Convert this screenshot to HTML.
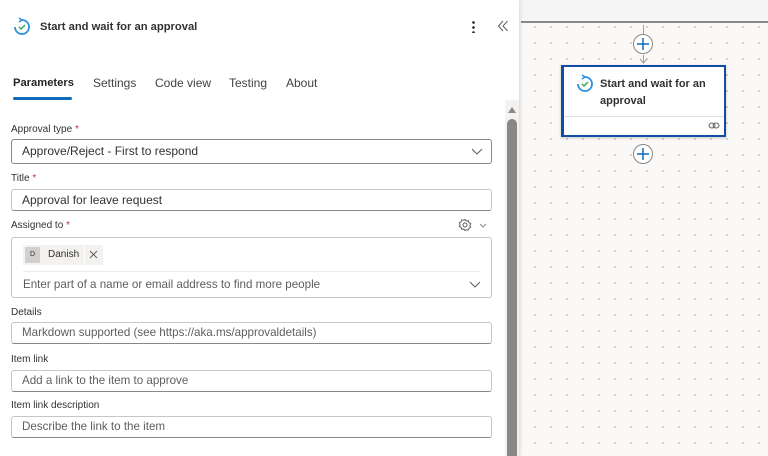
<!DOCTYPE html>
<html><head><style>
*{box-sizing:border-box;margin:0;padding:0}
body{width:768px;height:456px;overflow:hidden;font-family:"Liberation Sans",sans-serif;background:#faf9f8;position:relative}
.panel{position:absolute;left:0;top:0;width:519px;height:456px;background:#fff;box-shadow:1px 0 4px rgba(0,0,0,.15)}
.abs{position:absolute}
.lbl{position:absolute;left:11px;font-size:10px;color:#323130}
.req{color:#c4314b}
.inp{position:absolute;left:11px;width:481px;border:1px solid #8a8886;border-radius:3px;font-size:12px;color:#323130;padding-left:10px;background:#fff}
.ph{color:#605e5c;font-size:11.6px}
.canvas{position:absolute;left:521px;top:0;width:247px;height:456px;background-color:#faf9f8;background-image:radial-gradient(#c8c6c4 0.8px,transparent 1px);background-size:16px 16px;background-position:6px 3px}
.plus{position:absolute;width:20px;height:20px;border:1px solid #8a8886;border-radius:50%;background:#fff}
</style></head><body>
<div class="canvas"></div>
<div class="abs" style="left:521px;top:0;width:247px;height:23px;background:#f5f5f5;border-bottom:2px solid #8a8886"></div>
<div class="abs" style="left:643px;top:25px;width:1px;height:10px;background:#a19f9d"></div>
<div class="plus" style="left:633px;top:34px"><svg width="18" height="18" viewBox="0 0 18 18"><path d="M9 3v12M3 9h12" stroke="#0f6cbd" stroke-width="1.5"/></svg></div>
<div class="abs" style="left:643px;top:55px;width:1px;height:8px;background:#a19f9d"></div>
<svg class="abs" style="left:639px;top:58px" width="9" height="6"><path d="M1 1l3.5 4L8 1" stroke="#a19f9d" fill="none"/></svg>
<div class="abs" style="left:561px;top:65px;width:165px;height:72px;background:#fff;border:2px solid #0f4ea3;border-left-width:3px;box-shadow:0 1px 3px rgba(0,0,0,.2)">
<svg class="abs" style="left:11px;top:7px" width="20" height="20" viewBox="0 0 20 20"><path d="M10 3a7 7 0 1 1-7 7" stroke="#2f8fe0" stroke-width="1.8" fill="none"/><path d="M7 1l3 2-3 2" stroke="#2f8fe0" stroke-width="1.6" fill="none"/><path d="M7 10l2 2 4-4" stroke="#3aa853" stroke-width="1.5" fill="none"/></svg>
<div class="abs" style="left:36px;top:9px;font-size:11px;font-weight:bold;color:#323130;line-height:17px;width:120px">Start and wait for an approval</div>
<div class="abs" style="left:0;top:49px;width:160px;height:1px;background:#e1dfdd"></div>
<svg class="abs" style="left:144px;top:54px" width="12" height="9"><ellipse cx="4" cy="4.5" rx="3" ry="2.5" stroke="#605e5c" fill="none"/><ellipse cx="8" cy="4.5" rx="3" ry="2.5" stroke="#605e5c" fill="none"/></svg>
</div>
<div class="plus" style="left:633px;top:144px"><svg width="18" height="18" viewBox="0 0 18 18"><path d="M9 3v12M3 9h12" stroke="#0f6cbd" stroke-width="1.5"/></svg></div>

<div class="panel">
<svg class="abs" style="left:12px;top:17px" width="20" height="20" viewBox="0 0 20 20"><path d="M10 3a7 7 0 1 1-7 7" stroke="#2f8fe0" stroke-width="1.8" fill="none"/><path d="M7 1l3 2-3 2" stroke="#2f8fe0" stroke-width="1.6" fill="none"/><path d="M7 10l2 2 4-4" stroke="#3aa853" stroke-width="1.5" fill="none"/></svg>
<div class="abs" style="left:40px;top:21px;font-size:11.2px;font-weight:bold;color:#323130">Start and wait for an approval</div>
<div class="abs" style="left:472px;top:20px;width:3px;height:13px;background:radial-gradient(circle,#323130 1.2px,transparent 1.5px) 0 0/3px 5px"></div>
<svg class="abs" style="left:497px;top:20px" width="12" height="12"><path d="M6 1L1.5 6 6 11M10.5 1L6 6l4.5 5" stroke="#605e5c" fill="none"/></svg>
<div class="abs" style="left:13px;top:77px;font-size:11.2px;color:#242424;font-weight:bold">Parameters</div>
<div class="abs" style="left:13px;top:97px;width:59px;height:3px;background:#0f6cbd;border-radius:2px"></div>
<div class="abs" style="left:93px;top:76px;font-size:12px;color:#424242">Settings</div>
<div class="abs" style="left:155px;top:76px;font-size:12px;color:#424242">Code view</div>
<div class="abs" style="left:229px;top:76px;font-size:12px;color:#424242">Testing</div>
<div class="abs" style="left:286px;top:76px;font-size:12px;color:#424242">About</div>

<div class="lbl" style="top:124px">Approval type <span class="req">*</span></div>
<div class="inp" style="top:139px;height:25px;line-height:23px">Approve/Reject - First to respond<svg class="abs" style="right:8px;top:8px" width="12" height="8"><path d="M1 1l5 5 5-5" stroke="#605e5c" fill="none"/></svg></div>
<div class="lbl" style="top:173px">Title <span class="req">*</span></div>
<div class="inp" style="top:189px;height:22px;line-height:20px;border-color:#c8c6c4;border-bottom-color:#8a8886">Approval for leave request</div>
<div class="lbl" style="top:220px">Assigned to <span class="req">*</span></div>
<svg class="abs" style="left:458px;top:218px" width="14" height="14" viewBox="0 0 14 14"><circle cx="7" cy="7" r="2" stroke="#605e5c" fill="none"/><path d="M7 1.5l1.3 1.5 2-.3.6 1.9 1.8 1-.8 1.8.8 1.8-1.8 1-.6 1.9-2-.3L7 12.5 5.7 11l-2 .3-.6-1.9-1.8-1 .8-1.8-.8-1.8 1.8-1 .6-1.9 2 .3z" stroke="#605e5c" fill="none"/></svg>
<svg class="abs" style="left:479px;top:223px" width="8" height="5"><path d="M1 1l3 3 3-3" stroke="#8a8886" fill="none"/></svg>
<div class="inp" style="top:237px;height:61px;border-color:#c8c6c4;padding:0">
<div class="abs" style="left:11px;top:7px;width:80px;height:20px;background:#f3f2f1;border-radius:2px"></div>
<div class="abs" style="left:13px;top:9px;width:15px;height:16px;background:#d2d0ce;font-size:7px;text-align:center;line-height:16px;color:#323130">D</div>
<div class="abs" style="left:36px;top:11px;font-size:10px;color:#323130">Danish</div>
<div class="abs" style="left:72px;top:8px;width:1px;height:18px;background:#fff"></div>
<svg class="abs" style="left:77px;top:12px" width="9" height="9"><path d="M1 1l7 7M8 1L1 8" stroke="#605e5c"/></svg>
<div class="abs" style="left:11px;top:33px;width:458px;height:1px;background:#edebe9"></div>
<div class="abs ph" style="left:11px;top:40px">Enter part of a name or email address to find more people</div>
<svg class="abs" style="left:457px;top:43px" width="12" height="8"><path d="M1 1l5 5 5-5" stroke="#605e5c" fill="none"/></svg>
</div>
<div class="lbl" style="top:307px">Details</div>
<div class="inp ph" style="top:322px;height:22px;line-height:20px;border-color:#c8c6c4;border-bottom-color:#8a8886">Markdown supported (see https://aka.ms/approvaldetails)</div>
<div class="lbl" style="top:354px">Item link</div>
<div class="inp ph" style="top:370px;height:22px;line-height:20px;border-color:#c8c6c4;border-bottom-color:#8a8886">Add a link to the item to approve</div>
<div class="lbl" style="top:400px">Item link description</div>
<div class="inp ph" style="top:416px;height:22px;line-height:20px;border-color:#c8c6c4;border-bottom-color:#8a8886">Describe the link to the item</div>

<div class="abs" style="left:505px;top:100px;width:14px;height:356px;background:#f3f2f1"></div>
<svg class="abs" style="left:507px;top:106px" width="10" height="8"><path d="M5 1L9 7H1z" fill="#8a8886"/></svg>
<div class="abs" style="left:507px;top:119px;width:10px;height:337px;background:#8a8886;border-radius:5px 5px 0 0"></div>
</div>
</body></html>
